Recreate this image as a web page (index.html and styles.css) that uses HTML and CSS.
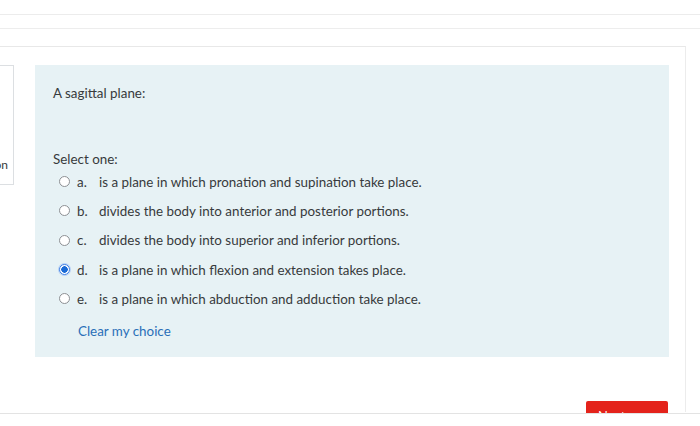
FILE: index.html
```html
<!DOCTYPE html>
<html lang="en">
    <head>
        <meta charset="UTF-8">
        <meta name="viewport" content="width=device-width, initial-scale=1.0">
        <title>Quiz</title>
        <link rel="stylesheet" href="styles.css">
    </head>
    <body>
        <div class="navbar"></div>
        <div class="subnav"></div>
        <div class="page">
            <div class="question">
                <div class="info">
                    <span class="info_label">Question</span>
                </div>
                <div class="formulation">
                    <p class="qtext">A sagittal plane:</p>

                    <div class="answer">
                        <p class="prompt">Select one:</p>
                        <label class="option">
                            <span class="radio"></span>
                            <span class="letter">a.</span>
                            <span>is a plane in which pronation and supination take place.</span>
                        </label>
                        <label class="option">
                            <span class="radio"></span>
                            <span class="letter">b.</span>
                            <span>divides the body into anterior and posterior portions.</span>
                        </label>
                        <label class="option">
                            <span class="radio"></span>
                            <span class="letter">c.</span>
                            <span>divides the body into superior and inferior portions.</span>
                        </label>
                        <label class="option">
                            <span class="radio checked"></span>
                            <span class="letter">d.</span>
                            <span>is a plane in which flexion and extension takes place.</span>
                        </label>
                        <label class="option">
                            <span class="radio"></span>
                            <span class="letter">e.</span>
                            <span>is a plane in which abduction and adduction take place.</span>
                        </label>
                        <a class="clear" href="#">Clear my choice</a>
                    </div>
                </div>
            </div>
            <div class="actions">
                <button class="next">Next page</button>
            </div>
        </div>
        <div class="footer"></div>
    </body>
</html>
```

FILE: styles.css
```css
body {
    margin: 0;
    background: #fff;
    font-family: Lato, "Noto Sans", sans-serif;
    font-size: 13.4px;
    color: #373a3c;
    height: 426px;
    overflow: hidden;
}

.navbar {
    height: 14px;
    border-bottom: 1px solid #ececec;
}

.subnav {
    height: 13px;
    border-bottom: 1px solid #ededed;
}

.page {
    margin-top: 17px;
    width: 686px;
    height: 366px;
    border-top: 1px solid #e8e8e8;
    border-right: 1px solid #ececec;
    box-sizing: border-box;
    padding-top: 18px;
}

.question {
    display: flex;
    align-items: flex-start;
}

.info {
    width: 14px;
    height: 120px;
    box-sizing: border-box;
    border: 1px solid #dcdfe2;
    border-left: none;
    overflow: hidden;
    display: flex;
    justify-content: flex-end;
    align-items: flex-end;
    padding-bottom: 12px;
}

.info_label {
    white-space: nowrap;
    font-size: 12px;
    margin-right: 5px;
}

.formulation {
    margin-left: 21px;
    width: 634px;
    height: 292px;
    box-sizing: border-box;
    background: #e7f2f5;
    padding: 18px 18px;
}

.qtext {
    margin: 0;
    line-height: 20px;
}

.answer {
    margin-top: 46px;
}

.prompt {
    margin: 0 0 3px;
    line-height: 20px;
}

.option {
    display: flex;
    align-items: center;
    height: 29.3px;
    padding-left: 6px;
    margin-top: -5px;
    margin-bottom: 5px;
}

.radio {
    width: 9px;
    height: 9px;
    border: 1px solid #8d9094;
    border-radius: 50%;
    background: #fff;
    margin-right: 7px;
    box-sizing: content-box;
}

.radio.checked {
    border-color: #3d7ee6;
    background: radial-gradient(circle, #1a6bd6 0 3px, #fff 3.5px);
    box-shadow: 0 0 0 1px #b7d1f5;
}

.letter {
    width: 22px;
}

.clear {
    display: inline-block;
    margin-left: 25px;
    margin-top: 5px;
    color: #2a6fb8;
    text-decoration: none;
}

.actions {
    display: flex;
    justify-content: flex-end;
    padding-right: 17px;
    margin-top: 44px;
}

.next {
    width: 82px;
    height: 30px;
    border: none;
    border-radius: 2px;
    background: #e4231b;
    color: #fff;
    font-family: inherit;
    font-size: 13px;
}

.footer {
    position: absolute;
    left: 0;
    right: 0;
    top: 413px;
    height: 13px;
    background: #fff;
    border-top: 1px solid #e3e3e3;
}
```
